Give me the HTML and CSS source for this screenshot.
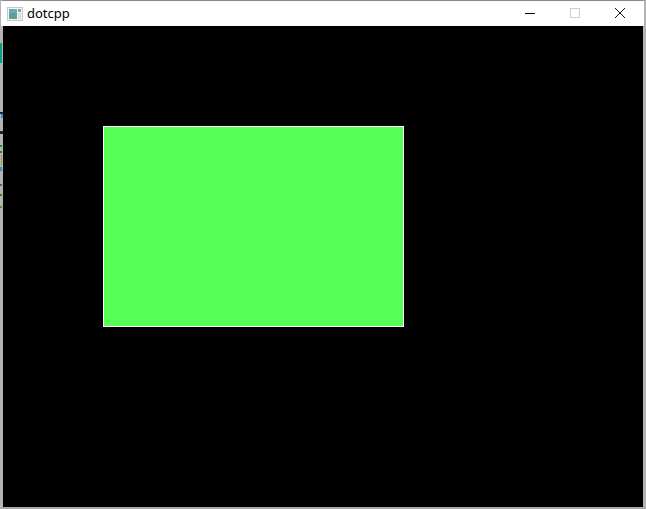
FILE: index.html
```html
<!DOCTYPE html>
<html lang="en">
<head>
<meta charset="utf-8">
<title>dotcpp</title>
<link rel="stylesheet" href="styles.css">
</head>
<body>
<div class="window">
  <header class="titlebar">
    <svg class="app-icon" width="16" height="16" viewBox="0 0 16 16" aria-hidden="true">
      <rect x="0.5" y="1.5" width="15" height="13" fill="#f4f5f5" stroke="#c4c8ca"/>
      <rect x="2" y="3" width="8" height="10" fill="#5fa08e"/>
      <rect x="2" y="3" width="8" height="4" fill="#6ba6c4"/>
      <rect x="11" y="3" width="3" height="3" fill="#8c9ba6"/>
      <rect x="11" y="7" width="3" height="6" fill="#d5dde1"/>
    </svg>
    <span class="title">dotcpp</span>
    <div class="controls">
      <span class="control"><svg width="12" height="12" viewBox="0 0 12 12"><path d="M1 6.5H11" stroke="#000" fill="none"/></svg></span>
      <span class="control"><svg width="12" height="12" viewBox="0 0 12 12"><rect x="1.5" y="1.5" width="9" height="9" stroke="#cfcfcf" fill="none"/></svg></span>
      <span class="control"><svg width="12" height="12" viewBox="0 0 12 12"><path d="M1 1L11 11M11 1L1 11" stroke="#111" fill="none"/></svg></span>
    </div>
  </header>
  <main class="canvas">
    <div class="rect"></div>
  </main>
  <i class="bleed teal"></i>
  <i class="bleed navy-a"></i>
  <i class="bleed blue-a"></i>
  <i class="bleed navy-b"></i>
  <i class="bleed green-a"></i>
  <i class="bleed green-b"></i>
  <i class="bleed yellow"></i>
  <i class="bleed cyan"></i>
  <i class="bleed green-c"></i>
  <i class="bleed green-d"></i>
  <i class="bleed olive"></i>
</div>
</body>
</html>
```

FILE: styles.css
```css
* { box-sizing: border-box; }
html, body { margin: 0; height: 100%; background: #fff; overflow: hidden; }
.window {
  position: relative;
  height: 509px;
  display: flex;
  flex-direction: column;
  border-style: solid;
  border-width: 1px 3px 2px 3px;
  border-color: #8a8a8a #b4b4b4 #a8a8a8 #b4b4b4;
}
.titlebar {
  height: 25px;
  margin: 0 -1px 0 -2px;
  display: flex;
  align-items: center;
  background: #fff;
  padding-left: 6px;
  padding-right: 2px;
  flex: none;
}
.app-icon { flex: none; }
.title {
  margin-left: 4px;
  margin-top: -1px;
  font: 13px/1 "Noto Sans", sans-serif;
  color: #000;
}
.controls { margin-left: auto; margin-top: -1px; display: flex; }
.control {
  width: 45px;
  height: 25px;
  display: flex;
  align-items: center;
  justify-content: center;
}
.canvas { flex: 1; background: #000; padding: 100px 0 0 100px; }
.rect {
  width: 301px;
  height: 201px;
  background: #55ff55;
  border: 1px solid #fff;
}
.bleed { position: absolute; left: -3px; width: 2px; height: 2px; }
.teal { top: 42px; height: 20px; background: #0f9d80; }
.navy-a { top: 111px; height: 2px; width: 3px; background: #1c2440; }
.blue-a { top: 113px; height: 4px; left: -2px; width: 2px; background: #3a8ad0; }
.navy-b { top: 130px; height: 3px; width: 3px; background: #1c2440; }
.green-a { top: 144px; background: #2a8a2a; }
.green-b { top: 150px; background: #2a8a2a; }
.yellow { top: 154px; height: 10px; left: -2px; width: 1px; background: #a89a30; }
.cyan { top: 166px; height: 4px; background: #2a9aa8; }
.green-c { top: 183px; background: #2a8a2a; }
.green-d { top: 193px; background: #2a8a2a; }
.olive { top: 205px; background: #5f8a20; }
```
